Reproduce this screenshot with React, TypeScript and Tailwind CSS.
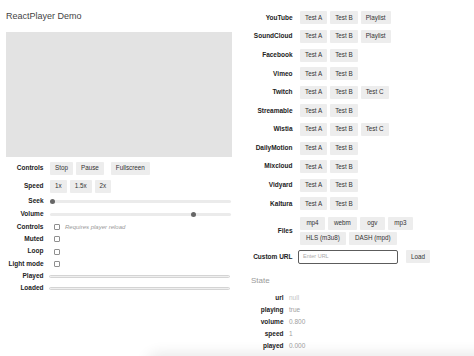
import React from "react";

const font = { fontFamily: '"Liberation Sans", Arial, sans-serif' };

const Btn: React.FC<{ children: React.ReactNode; wide?: boolean }> = ({ children, wide }) => (
  <span
    className={`h-[13px] ${wide ? "px-[6px] min-w-[25px]" : "px-[5px]"} flex items-center justify-center bg-[#ededed] text-[#333] text-[6.3px] leading-none rounded-[1px] whitespace-nowrap`}
  >
    {children}
  </span>
);

const Checkbox: React.FC = () => (
  <span className="w-[6px] h-[6px] border border-[#8f8f8f] rounded-[1px] bg-white shrink-0" />
);

const Slider: React.FC<{ value: number }> = ({ value }) => (
  <div className="relative flex-1 h-[3px] bg-[#ebebeb] rounded-full mr-[1px]">
    <span
      className="absolute top-1/2 w-[5px] h-[5px] -mt-[2.5px] rounded-full bg-[#666]"
      style={{ left: `calc(${value * 100}% - ${value * 5}px)` }}
    />
  </div>
);

const Progress: React.FC = () => (
  <div className="flex-1 h-[3px] bg-[#efefef] border border-[#d4d4d4] rounded-full mr-[2px] -ml-[1px]" />
);

const LeftRow: React.FC<{ label: string; h: string; children?: React.ReactNode }> = ({ label, h, children }) => (
  <div className={`flex items-center ${h}`}>
    <div className="w-[37.5px] text-right font-bold text-[6.5px] text-[#222] leading-none whitespace-nowrap">{label}</div>
    <div className="flex-1 flex items-center gap-[3px] pl-[6.5px]">{children}</div>
  </div>
);

const RightRow: React.FC<{ label: string; children?: React.ReactNode; className?: string }> = ({
  label,
  children,
  className = "h-[18.6px]",
}) => (
  <div className={`flex items-center ${className}`}>
    <div className="w-[42.5px] text-right font-bold text-[6.5px] text-[#222] leading-none whitespace-nowrap">{label}</div>
    <div className="flex-1 flex items-center gap-[3px] pl-[7.5px]">{children}</div>
  </div>
);

const players: [string, string[]][] = [
  ["YouTube", ["Test A", "Test B", "Playlist"]],
  ["SoundCloud", ["Test A", "Test B", "Playlist"]],
  ["Facebook", ["Test A", "Test B"]],
  ["Vimeo", ["Test A", "Test B"]],
  ["Twitch", ["Test A", "Test B", "Test C"]],
  ["Streamable", ["Test A", "Test B"]],
  ["Wistia", ["Test A", "Test B", "Test C"]],
  ["DailyMotion", ["Test A", "Test B"]],
  ["Mixcloud", ["Test A", "Test B"]],
  ["Vidyard", ["Test A", "Test B"]],
  ["Kaltura", ["Test A", "Test B"]],
];

const state: [string, string, string][] = [
  ["url", "null", "text-[#c4c4c4]"],
  ["playing", "true", "text-[#a0a0a0]"],
  ["volume", "0.800", "text-[#a0a0a0]"],
  ["speed", "1", "text-[#a0a0a0]"],
  ["played", "0.000", "text-[#a0a0a0]"],
];

export default function App() {
  return (
    <div className="relative w-[474px] h-[356px] overflow-hidden bg-white" style={font}>
      <div className="flex pl-[6px] gap-[18px]">
        {/* left column */}
        <div className="w-[226px] shrink-0">
          <div className="mt-[11px] h-[11px] leading-[11px] text-[9px] text-[#444] font-light">ReactPlayer Demo</div>
          <div className="mt-[10px] h-[125px] bg-[#e3e3e3]" />
          <div className="mt-[2px]">
            <LeftRow label="Controls" h="h-[18px]">
              <Btn>Stop</Btn>
              <Btn>Pause</Btn>
              <span className="ml-[1px]" />
              <Btn>Fullscreen</Btn>
            </LeftRow>
            <LeftRow label="Speed" h="h-[18px]">
              <Btn>1x</Btn>
              <Btn>1.5x</Btn>
              <Btn>2x</Btn>
            </LeftRow>
            <LeftRow label="Seek" h="h-[13px]">
              <Slider value={0} />
            </LeftRow>
            <LeftRow label="Volume" h="h-[12px]">
              <Slider value={0.8} />
            </LeftRow>
            <div className="mt-[1px]">
              <LeftRow label="Controls" h="h-[12.3px]">
                <span className="ml-[1px]" />
                <Checkbox />
                <span className="ml-[2px] italic text-[6px] text-[#9a9a9a] leading-none">Requires player reload</span>
              </LeftRow>
              <LeftRow label="Muted" h="h-[12.3px]">
                <span className="ml-[1px]" />
                <Checkbox />
              </LeftRow>
              <LeftRow label="Loop" h="h-[12.3px]">
                <span className="ml-[1px]" />
                <Checkbox />
              </LeftRow>
              <LeftRow label="Light mode" h="h-[12.3px]">
                <span className="ml-[1px]" />
                <Checkbox />
              </LeftRow>
              <LeftRow label="Played" h="h-[12.3px]">
                <Progress />
              </LeftRow>
              <LeftRow label="Loaded" h="h-[12.3px]">
                <Progress />
              </LeftRow>
            </div>
          </div>
        </div>

        {/* right column */}
        <div className="flex-1 pt-[8.7px]">
          {players.map(([name, tests]) => (
            <RightRow key={name} label={name}>
              {tests.map((t) => (
                <Btn key={t}>{t}</Btn>
              ))}
            </RightRow>
          ))}
          <RightRow label="Files" className="pt-[3.7px] pb-[3px]">
            <div className="flex flex-col gap-[2px]">
              <div className="flex gap-[3px]">
                <Btn wide>mp4</Btn>
                <Btn wide>webm</Btn>
                <Btn wide>ogv</Btn>
                <Btn wide>mp3</Btn>
              </div>
              <div className="flex gap-[3px]">
                <Btn wide>HLS (m3u8)</Btn>
                <Btn wide>DASH (mpd)</Btn>
              </div>
            </div>
          </RightRow>
          <RightRow label="Custom URL" className="h-[18px]">
            <div className="-ml-[2px] w-[100px] h-[14px] border border-[#5c5c5c] rounded-[2px] flex items-center pl-[4px] text-[5.5px] text-[#aaa] leading-none">
              Enter URL
            </div>
            <span className="ml-[2px]" />
            <Btn>Load</Btn>
          </RightRow>
          <div className="mt-[10px] h-[10px] leading-[10px] pl-[1px] text-[8px] text-[#9a9a9a] font-light">State</div>
          <div className="mt-[6px]">
            {state.map(([k, v, c]) => (
              <div key={k} className="flex items-center h-[12px]">
                <div className="w-[33.5px] text-right font-bold text-[6.5px] text-[#222] leading-none">{k}</div>
                <div className={`pl-[5.5px] text-[6.5px] leading-none ${c}`}>{v}</div>
              </div>
            ))}
          </div>
        </div>
      </div>

      {/* faint shadow along the bottom edge */}
      <div className="absolute top-[357px] left-[150px] w-[360px] h-[20px] rounded-l-full shadow-[0_0_14px_4px_rgba(0,0,0,0.09)]" />
    </div>
  );
}
